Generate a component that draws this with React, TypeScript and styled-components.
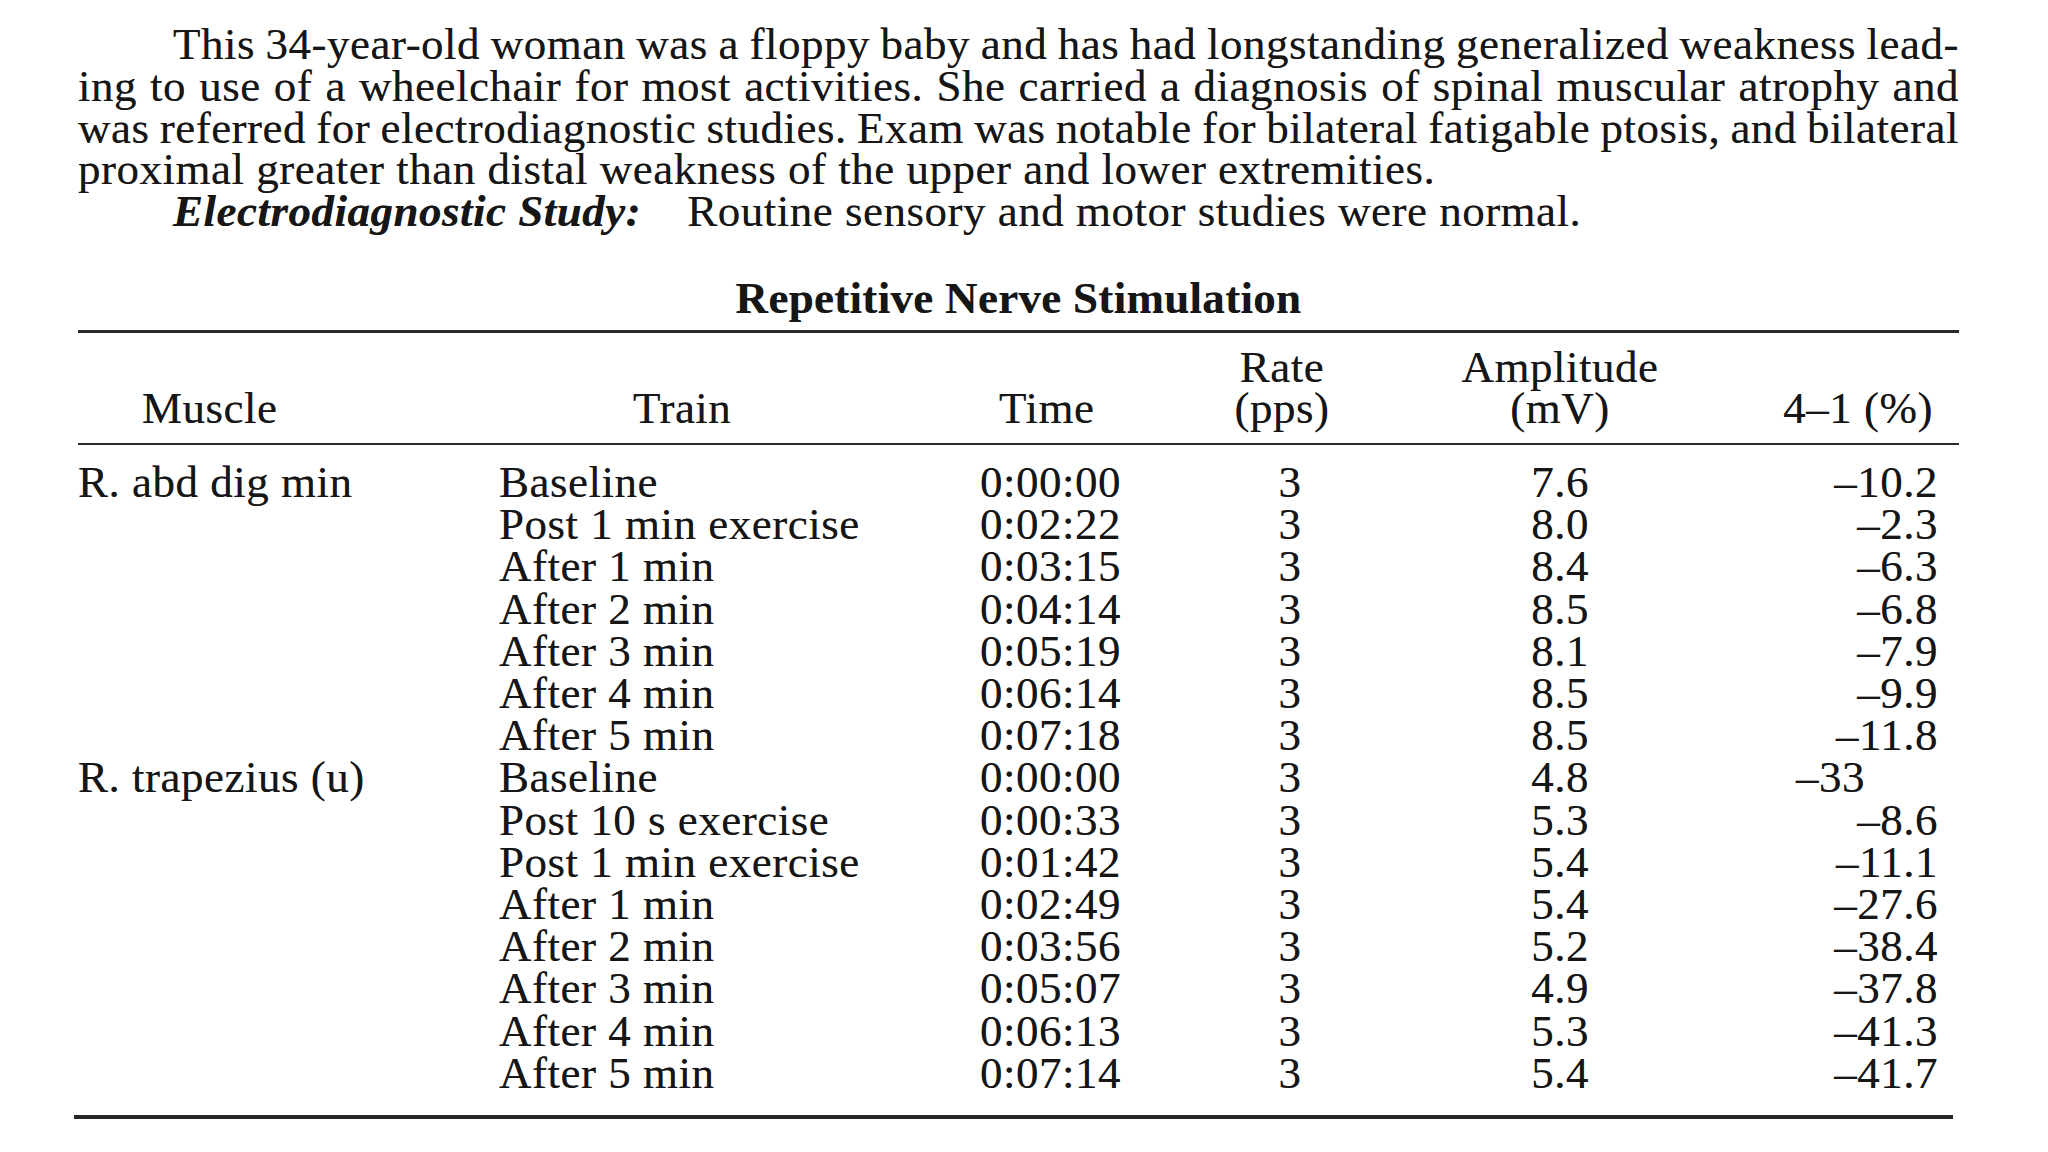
import React from 'react';
import styled, { createGlobalStyle } from 'styled-components';

// --- Global --- //
const GlobalStyle = createGlobalStyle`
  html, body {
    margin: 0;
    padding: 0;
    background: #ffffff;
  }
  body {
    font-family: "Liberation Serif", "Times New Roman", serif;
    color: #161616;
    text-shadow: 0 0 0.6px rgba(0, 0, 0, 0.55);
  }
`;

// --- Styled-component --- //
const Page = styled.div`
  width: 2048px;
  height: 1152px;
  box-sizing: border-box;
  padding: 24px 89px 0 78px;
  overflow: hidden;
`;

const Paragraph = styled.div`
  font-size: 45px;
  line-height: 41.8px;
  letter-spacing: 0.5px;
`;

const Line = styled.div<{ $indent?: boolean; $last?: boolean; $words?: number }>`
  padding-left: ${(p) => (p.$indent ? '95px' : '0')};
  text-align: justify;
  text-align-last: ${(p) => (p.$last ? 'left' : 'justify')};
  word-spacing: ${(p) => (p.$words ? `${p.$words}px` : 'normal')};
`;

const StudyLine = styled.div`
  display: flex;
  align-items: baseline;
  padding-left: 95px;
`;

const StudyLabel = styled.span`
  font-weight: 700;
  font-style: italic;
  margin-right: 46px;
`;

const TableTitle = styled.div`
  margin-top: 44px;
  font-size: 45px;
  line-height: 42px;
  font-weight: 700;
  text-align: center;
  letter-spacing: 0.3px;
`;

const COLUMNS = '421px 481px 210px 200px 340px 229px';

const HeadGrid = styled.div`
  margin-top: 11px;
  display: grid;
  grid-template-columns: ${COLUMNS};
  border-top: 3px solid #2a2a2a;
  border-bottom: 2px solid #2a2a2a;
  padding: 14px 0 14px;
  font-size: 45px;
  line-height: 41px;
  letter-spacing: 0.5px;
`;

const HeadCell = styled.div<{ $align: string; $pl?: number; $pr?: number }>`
  align-self: end;
  text-align: ${(p) => p.$align};
  padding-left: ${(p) => p.$pl ?? 0}px;
  padding-right: ${(p) => p.$pr ?? 0}px;
`;

const BodyGrid = styled.div`
  display: grid;
  grid-template-columns: ${COLUMNS};
  padding-top: 16px;
  font-size: 45px;
  line-height: 42.2px;
  letter-spacing: 0.5px;
`;

const Cell = styled.div<{ $align: string; $pr?: number }>`
  text-align: ${(p) => p.$align};
  padding-right: ${(p) => p.$pr ?? 0}px;
  white-space: nowrap;
`;

const BottomRule = styled.div`
  margin: 21px 6px 0 -4px;
  height: 4px;
  background: #262626;
`;

type Row = {
  muscle?: string;
  train: string;
  time: string;
  amp: string;
  dec: string;
  pad?: number;
};

const rows: Row[] = [
  { muscle: 'R. abd dig min', train: 'Baseline', time: '0:00:00', amp: '7.6', dec: '–10.2' },
  { train: 'Post 1 min exercise', time: '0:02:22', amp: '8.0', dec: '–2.3' },
  { train: 'After 1 min', time: '0:03:15', amp: '8.4', dec: '–6.3' },
  { train: 'After 2 min', time: '0:04:14', amp: '8.5', dec: '–6.8' },
  { train: 'After 3 min', time: '0:05:19', amp: '8.1', dec: '–7.9' },
  { train: 'After 4 min', time: '0:06:14', amp: '8.5', dec: '–9.9' },
  { train: 'After 5 min', time: '0:07:18', amp: '8.5', dec: '–11.8' },
  { muscle: 'R. trapezius (u)', train: 'Baseline', time: '0:00:00', amp: '4.8', dec: '–33', pad: 94 },
  { train: 'Post 10 s exercise', time: '0:00:33', amp: '5.3', dec: '–8.6' },
  { train: 'Post 1 min exercise', time: '0:01:42', amp: '5.4', dec: '–11.1' },
  { train: 'After 1 min', time: '0:02:49', amp: '5.4', dec: '–27.6' },
  { train: 'After 2 min', time: '0:03:56', amp: '5.2', dec: '–38.4' },
  { train: 'After 3 min', time: '0:05:07', amp: '4.9', dec: '–37.8' },
  { train: 'After 4 min', time: '0:06:13', amp: '5.3', dec: '–41.3' },
  { train: 'After 5 min', time: '0:07:14', amp: '5.4', dec: '–41.7' },
];

export default function App() {
  return (
    <>
      <GlobalStyle />
      <Page>
        <Paragraph>
          <Line $indent $words={-7}>
            This 34-year-old woman was a floppy baby and has had longstanding generalized weakness lead-
          </Line>
          <Line $words={-5}>
            ing to use of a wheelchair for most activities. She carried a diagnosis of spinal muscular atrophy and
          </Line>
          <Line $words={-7}>
            was referred for electrodiagnostic studies. Exam was notable for bilateral fatigable ptosis, and bilateral
          </Line>
          <Line $last>
            proximal greater than distal weakness of the upper and lower extremities.
          </Line>
          <StudyLine>
            <StudyLabel>Electrodiagnostic Study:</StudyLabel>
            <span>Routine sensory and motor studies were normal.</span>
          </StudyLine>
        </Paragraph>

        <TableTitle>Repetitive Nerve Stimulation</TableTitle>

        <HeadGrid>
          <HeadCell $align="left" $pl={64}>Muscle</HeadCell>
          <HeadCell $align="left" $pl={134}>Train</HeadCell>
          <HeadCell $align="left" $pl={19}>Time</HeadCell>
          <HeadCell $align="center" $pr={16}>
            Rate
            <br />
            (pps)
          </HeadCell>
          <HeadCell $align="center">
            Amplitude
            <br />
            (mV)
          </HeadCell>
          <HeadCell $align="right" $pr={26}>4–1 (%)</HeadCell>
        </HeadGrid>

        <BodyGrid>
          {rows.map((r, i) => (
            <React.Fragment key={i}>
              <Cell $align="left">{r.muscle ?? ''}</Cell>
              <Cell $align="left">{r.train}</Cell>
              <Cell $align="left">{r.time}</Cell>
              <Cell $align="center">3</Cell>
              <Cell $align="center">{r.amp}</Cell>
              <Cell $align="right" $pr={r.pad ?? 21}>{r.dec}</Cell>
            </React.Fragment>
          ))}
        </BodyGrid>

        <BottomRule />
      </Page>
    </>
  );
}
